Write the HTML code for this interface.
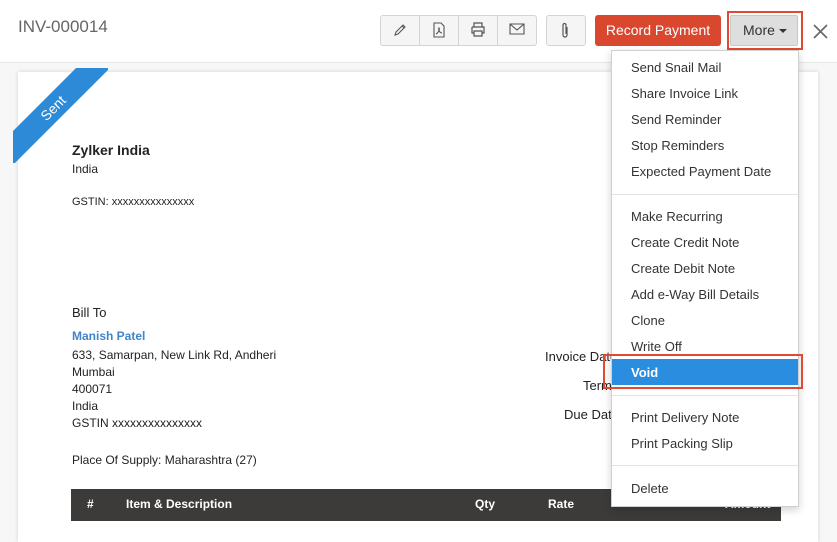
<!DOCTYPE html>
<html><head><style>
*{margin:0;padding:0;box-sizing:border-box}
body{width:837px;height:530px;overflow:hidden;background:#f7f7f7;font-family:"Liberation Sans",sans-serif;position:relative;color:#333}
.hdr{position:absolute;left:0;top:0;width:837px;height:63px;background:#fff;border-bottom:1px solid #e6e6e6}
.abs{position:absolute}
.t{position:absolute;white-space:nowrap;font-size:12px;color:#222}
.btn{position:absolute;top:15px;height:31px;background:#f5f5f5;border:1px solid #d4d4d4}
.menu{position:absolute;left:611px;top:50px;width:188px;height:457px;background:#fff;border:1px solid #d0d0d0;box-shadow:0 3px 8px rgba(0,0,0,.18)}
.mi{position:absolute;left:19px;font-size:13px;color:#333;white-space:nowrap}
.dv{position:absolute;left:0;width:186px;height:1px;background:#e3e3e3}
</style></head><body>
<div class="hdr"></div>
<div class="t" style="left:18px;top:17px;font-size:17px;color:#666">INV-000014</div>
<div class="btn" style="left:380px;width:157px;border-radius:3px"></div>
<div class="abs" style="left:419px;top:16px;width:1px;height:29px;background:#d4d4d4"></div>
<div class="abs" style="left:458px;top:16px;width:1px;height:29px;background:#d4d4d4"></div>
<div class="abs" style="left:497px;top:16px;width:1px;height:29px;background:#d4d4d4"></div>
<svg class="abs" style="left:393px;top:23px" width="14" height="14" viewBox="0 0 14 14" fill="none" stroke="#555" stroke-width="1.1"><path d="M2 12l1-3 7-7 2 2-7 7z M9 3l2 2"/></svg>
<svg class="abs" style="left:433px;top:22px" width="12" height="16" viewBox="0 0 12 16" fill="none" stroke="#555" stroke-width="1.1"><path d="M1 1h7l3 3v11H1z M3 12c2-1 4-4 3-6-1 2 1 5 3 5"/></svg>
<svg class="abs" style="left:470px;top:22px" width="16" height="15" viewBox="0 0 16 15" fill="none" stroke="#555" stroke-width="1.2"><path d="M4 5V1h8v4 M2 5h12v6h-2 M4 11H2V5 M4 9h8v5H4z"/></svg>
<svg class="abs" style="left:509px;top:23px" width="16" height="12" viewBox="0 0 16 12" fill="none" stroke="#555" stroke-width="1.1"><path d="M1 1h14v10H1z M1 1l7 6 7-6"/></svg>
<div class="btn" style="left:546px;width:40px;border-radius:3px"></div>
<svg class="abs" style="left:561px;top:22px" width="9" height="17" viewBox="0 0 9 17" fill="none" stroke="#555" stroke-width="1.2"><path d="M6 5v8a2 2 0 01-4 0V3a1.5 1.5 0 013 0v9"/></svg>
<div class="abs" style="left:595px;top:15px;width:126px;height:31px;background:#d9472f;border-radius:3px;color:#fff;font-size:14px;text-align:center;line-height:31px">Record Payment</div>
<div class="abs" style="left:727px;top:11px;width:76px;height:39px;border:2px solid #e04a33"></div>
<div class="abs" style="left:730px;top:15px;width:68px;height:31px;background:#dedede;border:1px solid #c8c8c8;border-radius:2px;font-size:14px;color:#333;line-height:29px;padding-left:12px">More <span style="display:inline-block;border-left:4px solid transparent;border-right:4px solid transparent;border-top:4px solid #333;vertical-align:middle"></span></div>
<svg class="abs" style="left:813px;top:24px" width="15" height="15" viewBox="0 0 15 15" stroke="#666" stroke-width="1.6"><path d="M1 1l13 13M14 1L1 14"/></svg>

<div class="abs" style="left:18px;top:72px;width:800px;height:470px;background:#fff;box-shadow:0 0 4px rgba(0,0,0,.15)"></div>
<div class="abs" style="left:13px;top:68px;width:95px;height:95px;overflow:hidden">
<div class="abs" style="left:-30px;top:28px;width:140px;height:24px;background:#2d8ad6;transform:rotate(-45deg);color:#fff;font-size:14px;text-align:center;line-height:24px">Sent</div></div>
<div class="t" style="left:72px;top:142px;font-weight:bold;font-size:14px">Zylker India</div>
<div class="t" style="left:72px;top:162px">India</div>
<div class="t" style="left:72px;top:196px;font-size:11px">GSTIN: xxxxxxxxxxxxxxx</div>
<div class="t" style="left:72px;top:305px;font-size:13px">Bill To</div>
<div class="t" style="left:72px;top:329px;font-weight:bold;color:#3f86c9">Manish Patel</div>
<div class="t" style="left:72px;top:347px;line-height:17px">633, Samarpan, New Link Rd, Andheri<br>Mumbai<br>400071<br>India<br>GSTIN xxxxxxxxxxxxxxx</div>
<div class="t" style="left:72px;top:453px">Place Of Supply: Maharashtra (27)</div>
<div class="t" style="left:545px;top:349px;font-size:13px">Invoice Date</div>
<div class="t" style="left:583px;top:378px;font-size:13px">Terms</div>
<div class="t" style="left:564px;top:407px;font-size:13px">Due Date</div>
<div class="abs" style="left:71px;top:489px;width:710px;height:32px;background:#3c3b39"></div>
<div class="t" style="left:87px;top:497px;color:#fff;font-weight:bold">#</div>
<div class="t" style="left:126px;top:497px;color:#fff;font-weight:bold">Item &amp; Description</div>
<div class="t" style="left:475px;top:497px;color:#fff;font-weight:bold">Qty</div>
<div class="t" style="left:548px;top:497px;color:#fff;font-weight:bold">Rate</div>
<div class="t" style="left:725px;top:497px;color:#fff;font-weight:bold">Amount</div>

<div class="menu">
<div class="mi" style="top:9px">Send Snail Mail</div>
<div class="mi" style="top:35px">Share Invoice Link</div>
<div class="mi" style="top:61px">Send Reminder</div>
<div class="mi" style="top:87px">Stop Reminders</div>
<div class="mi" style="top:113px">Expected Payment Date</div>
<div class="dv" style="top:143px"></div>
<div class="mi" style="top:158px">Make Recurring</div>
<div class="mi" style="top:184px">Create Credit Note</div>
<div class="mi" style="top:210px">Create Debit Note</div>
<div class="mi" style="top:236px">Add e-Way Bill Details</div>
<div class="mi" style="top:262px">Clone</div>
<div class="mi" style="top:288px">Write Off</div>
<div class="abs" style="left:0;top:308px;width:186px;height:26px;background:#2b8de0"></div>
<div class="mi" style="top:314px;color:#fff;font-weight:bold">Void</div>
<div class="dv" style="top:344px"></div>
<div class="mi" style="top:359px">Print Delivery Note</div>
<div class="mi" style="top:385px">Print Packing Slip</div>
<div class="dv" style="top:414px"></div>
<div class="mi" style="top:430px">Delete</div>
</div>
<div class="abs" style="left:603px;top:354px;width:200px;height:35px;border:2px solid #e04a33"></div>
</body></html>
